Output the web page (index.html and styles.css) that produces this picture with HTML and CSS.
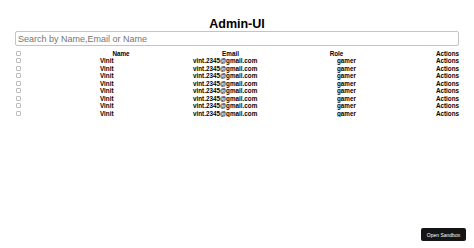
FILE: index.html
```html
<!DOCTYPE html>
<html>

<head>
    <title>Admin-UI</title>
    <link rel="stylesheet" href="styles.css">
</head>

<body>
    <div class="app">
        <h1 class="title">Admin-UI</h1>
        <input class="search" type="text" placeholder="Search by Name,Email or Name">
        <div class="table">
            <div class="head-row">
                <span><input class="check" type="checkbox"></span>
                <span class="col">Name</span>
                <span class="col">Email</span>
                <span class="col">Role</span>
                <span class="col-end">Actions</span>
            </div>
            <div class="row"><span><input class="check" type="checkbox"></span><span>Vinit</span><span>vint.2345@gmail.com</span><span>gamer</span><span class="col-end">Actions</span></div>
            <div class="row"><span><input class="check" type="checkbox"></span><span>Vinit</span><span>vint.2345@gmail.com</span><span>gamer</span><span class="col-end">Actions</span></div>
            <div class="row"><span><input class="check" type="checkbox"></span><span>Vinit</span><span>vint.2345@gmail.com</span><span>gamer</span><span class="col-end">Actions</span></div>
            <div class="row"><span><input class="check" type="checkbox"></span><span>Vinit</span><span>vint.2345@gmail.com</span><span>gamer</span><span class="col-end">Actions</span></div>
            <div class="row"><span><input class="check" type="checkbox"></span><span>Vinit</span><span>vint.2345@gmail.com</span><span>gamer</span><span class="col-end">Actions</span></div>
            <div class="row"><span><input class="check" type="checkbox"></span><span>Vinit</span><span>vint.2345@gmail.com</span><span>gamer</span><span class="col-end">Actions</span></div>
            <div class="row"><span><input class="check" type="checkbox"></span><span>Vinit</span><span>vint.2345@gmail.com</span><span>gamer</span><span class="col-end">Actions</span></div>
            <div class="row"><span><input class="check" type="checkbox"></span><span>Vinit</span><span>vint.2345@gmail.com</span><span>gamer</span><span class="col-end">Actions</span></div>
        </div>
    </div>
    <button class="sandbox">Open Sandbox</button>
</body>

</html>
```

FILE: styles.css
```css
* {
    margin: 0;
    padding: 0;
    box-sizing: border-box;
}

body {
    background-color: #ffffff;
    color: #000000;
    font-family: "Liberation Sans", Arial, sans-serif;
}

.app {
    padding: 17px 15px 0 15px;
}

.title {
    font-size: 12.5px;
    line-height: 14px;
    text-align: center;
    font-weight: bold;
}

.search {
    display: block;
    width: 100%;
    height: 15px;
    border: 1px solid #c4c4c4;
    border-radius: 2px;
    padding: 0 2px;
    font-family: "Liberation Sans", Arial, sans-serif;
    font-size: 9px;
    outline: none;
}

.search::placeholder {
    color: #757575;
}

.table {
    margin-top: 3.5px;
    font-size: 6.3px;
    font-weight: bold;
}

.head-row,
.row {
    display: grid;
    height: 7.5px;
    line-height: 7.5px;
    align-items: center;
}

.head-row {
    grid-template-columns: 52px 108px 111px 101px 1fr;
}

.row {
    grid-template-columns: 85px 93px 144px 1fr auto;
}

.col {
    text-align: center;
}

.col-end {
    text-align: right;
}

.check {
    appearance: none;
    display: block;
    width: 5px;
    height: 5px;
    margin-left: 1px;
    border: 1px solid #bdbdbd;
    border-radius: 1px;
    background: #ffffff;
}

.sandbox {
    position: fixed;
    right: 8px;
    bottom: 7px;
    width: 45px;
    height: 13px;
    background-color: #151515;
    color: #ffffff;
    border: 0;
    border-radius: 2px;
    font-family: "Liberation Sans", Arial, sans-serif;
    font-size: 5px;
}
```
